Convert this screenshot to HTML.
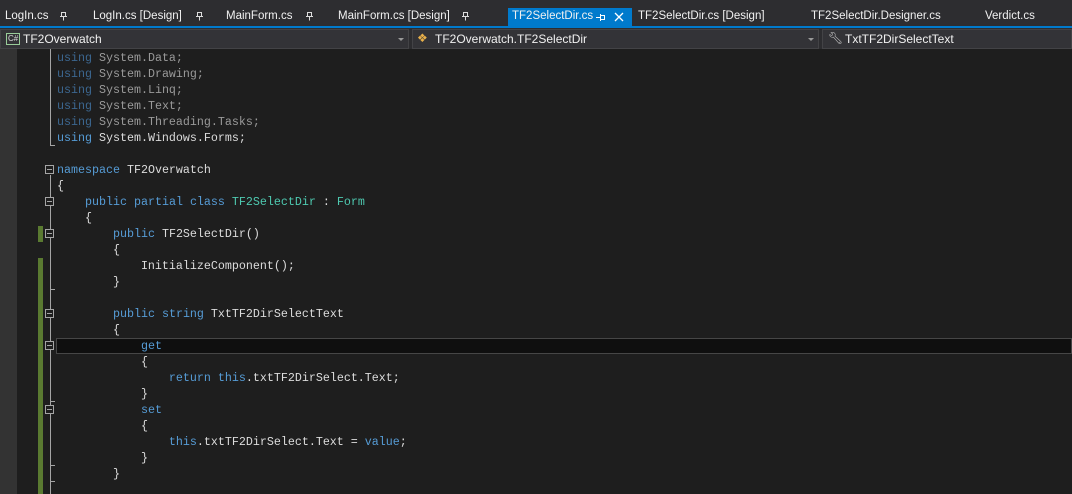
<!DOCTYPE html>
<html><head><meta charset="utf-8"><style>
*{margin:0;padding:0;box-sizing:border-box}
body{width:1072px;height:494px;overflow:hidden;background:#2d2d30;font-family:"Liberation Sans",sans-serif;position:relative}
.tab{position:absolute;top:10px;font-size:11.5px;color:#f1f1f1;white-space:nowrap}
.pin{position:absolute;top:12px}
#blue{position:absolute;top:26px;left:0;width:1072px;height:2px;background:#007acc}
#act{position:absolute;left:508px;top:8px;width:124px;height:20px;background:#007acc}
.dd{position:absolute;top:29px;height:20px;background:#333337;border:1px solid #434346;font-size:12px;color:#f1f1f1;padding:2px 0 0 22px;white-space:nowrap}
.arr{position:absolute;right:4px;top:8px;width:0;height:0;border-left:3px solid transparent;border-right:3px solid transparent;border-top:3px solid #999}
#ed{position:absolute;top:49px;left:0;width:1072px;height:445px;background:#1e1e1e}
#gut{position:absolute;top:49px;left:0;width:17px;height:445px;background:#333333}
.l{position:absolute;left:57px;font-family:"Liberation Mono",monospace;font-size:11.67px;color:#dcdcdc;white-space:pre;line-height:16px;height:16px;margin-top:1px}
.k{color:#569cd6}.t{color:#4ec9b0}.dk{color:#3c6790}.dt{color:#9a9a9a}
.box{position:absolute;left:45px;width:9px;height:9px;border:1px solid #a5a5a5;background:#1e1e1e}
.box:after{content:"";position:absolute;left:1px;top:3px;width:5px;height:1px;background:#a5a5a5}
.vl{position:absolute;left:50px;width:1px;background:#a5a5a5}
.hl{position:absolute;left:50px;width:5px;height:1px;background:#a5a5a5}
.g{position:absolute;left:38px;width:5px;background:#5a7a31}
</style></head><body>
<div id="act"></div>
<div class="tab" style="left:5px">LogIn.cs</div>
<svg class="pin" style="left:59px" width="9" height="9"><path d="M2.5 0.5h4v4h-4z M1 4.5h7 M4.5 4.5v4" stroke="#ddd" fill="none"/></svg>
<div class="tab" style="left:93px">LogIn.cs [Design]</div>
<svg class="pin" style="left:195px" width="9" height="9"><path d="M2.5 0.5h4v4h-4z M1 4.5h7 M4.5 4.5v4" stroke="#ddd" fill="none"/></svg>
<div class="tab" style="left:226px">MainForm.cs</div>
<svg class="pin" style="left:305px" width="9" height="9"><path d="M2.5 0.5h4v4h-4z M1 4.5h7 M4.5 4.5v4" stroke="#ddd" fill="none"/></svg>
<div class="tab" style="left:338px">MainForm.cs [Design]</div>
<svg class="pin" style="left:461px" width="9" height="9"><path d="M2.5 0.5h4v4h-4z M1 4.5h7 M4.5 4.5v4" stroke="#ddd" fill="none"/></svg>
<div class="tab" style="left:512px">TF2SelectDir.cs</div>
<svg class="pin" style="left:596px;top:13px" width="10" height="9"><path d="M0 4.5h4 M4.5 1v7 M4.5 2.5h4v4h-4" stroke="#fff" fill="none"/></svg>
<svg class="pin" style="left:614px;top:12px" width="10" height="10"><path d="M1 1l8 8M9 1l-8 8" stroke="#fff" stroke-width="1.3"/></svg>
<div class="tab" style="left:638px">TF2SelectDir.cs [Design]</div>
<div class="tab" style="left:811px">TF2SelectDir.Designer.cs</div>
<div class="tab" style="left:985px">Verdict.cs</div>
<div id="blue"></div>
<div class="dd" style="left:0;width:409px"><span style="position:absolute;left:5px;top:3px;font-size:8px;border:1px solid #9c9;color:#ddd;padding:0 1px;line-height:10px">C#</span>TF2Overwatch<div class="arr"></div></div>
<div class="dd" style="left:412px;width:407px"><span style="position:absolute;left:4px;top:1px;color:#e8b04a;font-size:12px">&#x2756;</span>TF2Overwatch.TF2SelectDir<div class="arr"></div></div>
<div class="dd" style="left:822px;width:250px"><span style="position:absolute;left:5px;top:1px;color:#ccc;font-size:12px">&#x1F527;&#xFE0E;</span>TxtTF2DirSelectText</div>
<div id="ed"></div><div id="gut"></div>
<div class="g" style="top:226px;height:16px"></div>
<div class="g" style="top:258px;height:236px"></div>
<div style="position:absolute;left:56px;top:338px;width:1016px;height:16px;background:#0f0f0f;border:1px solid #464646"></div>
<div class="vl" style="top:49px;height:96px"></div><div class="hl" style="top:145px"></div>
<div class="vl" style="top:175px;height:319px"></div>
<div class="hl" style="top:289px"></div><div class="hl" style="top:401px"></div><div class="hl" style="top:465px"></div><div class="hl" style="top:481px"></div>
<div class="box" style="top:165px"></div><div class="box" style="top:197px"></div><div class="box" style="top:229px"></div><div class="box" style="top:309px"></div><div class="box" style="top:341px"></div><div class="box" style="top:405px"></div>
<div class="l" style="top:49px"><span class="dk">using</span> <span class="dt">System.Data;</span></div>
<div class="l" style="top:65px"><span class="dk">using</span> <span class="dt">System.Drawing;</span></div>
<div class="l" style="top:81px"><span class="dk">using</span> <span class="dt">System.Linq;</span></div>
<div class="l" style="top:97px"><span class="dk">using</span> <span class="dt">System.Text;</span></div>
<div class="l" style="top:113px"><span class="dk">using</span> <span class="dt">System.Threading.Tasks;</span></div>
<div class="l" style="top:129px"><span class="k">using</span> System.Windows.Forms;</div>
<div class="l" style="top:161px"><span class="k">namespace</span> TF2Overwatch</div>
<div class="l" style="top:177px">{</div>
<div class="l" style="top:193px">    <span class="k">public</span> <span class="k">partial</span> <span class="k">class</span> <span class="t">TF2SelectDir</span> : <span class="t">Form</span></div>
<div class="l" style="top:209px">    {</div>
<div class="l" style="top:225px">        <span class="k">public</span> TF2SelectDir()</div>
<div class="l" style="top:241px">        {</div>
<div class="l" style="top:257px">            InitializeComponent();</div>
<div class="l" style="top:273px">        }</div>
<div class="l" style="top:305px">        <span class="k">public</span> <span class="k">string</span> TxtTF2DirSelectText</div>
<div class="l" style="top:321px">        {</div>
<div class="l" style="top:337px">            <span class="k">get</span></div>
<div class="l" style="top:353px">            {</div>
<div class="l" style="top:369px">                <span class="k">return</span> <span class="k">this</span>.txtTF2DirSelect.Text;</div>
<div class="l" style="top:385px">            }</div>
<div class="l" style="top:401px">            <span class="k">set</span></div>
<div class="l" style="top:417px">            {</div>
<div class="l" style="top:433px">                <span class="k">this</span>.txtTF2DirSelect.Text = <span class="k">value</span>;</div>
<div class="l" style="top:449px">            }</div>
<div class="l" style="top:465px">        }</div>
</body></html>
